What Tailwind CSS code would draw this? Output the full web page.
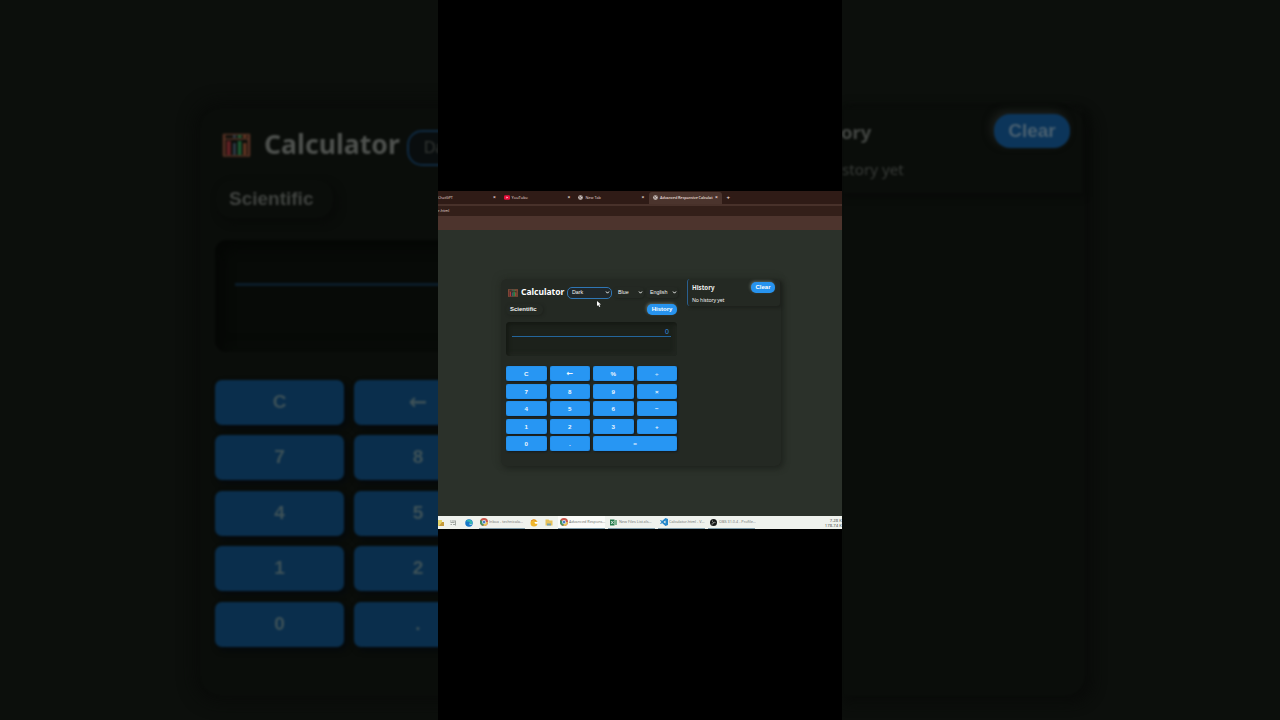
<!DOCTYPE html>
<html lang="en">
  <head>
    <meta charset="UTF-8" />
    <meta name="viewport" content="width=device-width, initial-scale=1.0" />
    <title>Advanced Responsive Calculator</title>
    <script src="https://cdn.jsdelivr.net/npm/@tailwindcss/browser@4"></script>
  </head>
  <body class="bg-black">
    <svg class="hidden">
      <symbol id="abacus" viewBox="0 0 28 24" preserveAspectRatio="none">
        <path d="M2 1v22M26 1v22" stroke="#a5533c" stroke-width="2.5" />
        <path d="M1 23h26M1 6h26M1 1.5h26" stroke="#a05a40" stroke-width="1.5" />
        <path d="M6.5 8v14" stroke="#b8343c" stroke-width="4" />
        <path d="M12 2v3M12 10v12" stroke="#5a6f8a" stroke-width="2.5" />
        <path d="M17 2v3M17 8v14" stroke="#2fa45a" stroke-width="3.5" />
        <path d="M22 2v3M22 10v12" stroke="#c0603c" stroke-width="3" />
      </symbol>
      <symbol id="chevron" viewBox="0 0 6 4">
        <path d="M1 .7l2 2.2 2-2.2" fill="none" stroke="#f3f5f3" stroke-width="1.3" />
      </symbol>
      <symbol id="globe" viewBox="0 0 10 10">
        <circle cx="5" cy="5" r="4.6" fill="#d9d0cc" />
        <path d="M2 3l3 1-1 2-2 0M6 1l1 2 2 1M5 8l2-2" fill="none" stroke="#4b3733" stroke-width="1.2" />
      </symbol>
      <symbol id="chrome" viewBox="0 0 16 16">
        <circle cx="8" cy="8" r="8" fill="#c9564b" />
        <path d="M8 8L1 4a8 8 0 0 0 6 12z" fill="#3f9463" />
        <path d="M8 8h8a8 8 0 0 1-9 8z" fill="#e6c25a" />
        <circle cx="8" cy="8" r="4" fill="#fff" />
        <circle cx="8" cy="8" r="3" fill="#4c7fc8" />
      </symbol>
    </svg>

    <div class="flex h-screen w-screen overflow-hidden font-['Liberation_Sans',sans-serif]">
      <!-- Left backdrop -->
      <aside class="w-[438px] h-full shrink-0 overflow-hidden bg-[#0c0f0c] pt-[108px] pl-[200px]">
        <div class="w-[600px] h-[588px] rounded-[20px] bg-[#0a0d0a] shadow-[0_0_16px_6px_#090b09] pt-[18px] pl-[15px] blur-[0.8px]">
          <div class="flex items-center h-[40px]">
            <svg class="ml-[7px] w-[29px] h-[24px] -mt-[3px] opacity-50"><use href="#abacus" /></svg>
            <h1 class="ml-[13px] w-[143px] whitespace-nowrap text-[26.6px] leading-none font-bold text-[#4d504d] font-['Noto_Sans',sans-serif] -mt-[4px]">Calculator</h1>
            <div class="w-[140px] h-[36px] mt-[4px] rounded-[15px] border-2 border-[#0f2a42] bg-[#090d0e] pl-[15px] flex items-center text-[16px] text-[#343734]">Dark</div>
          </div>
          <div class="mt-[14px] ml-[1px] w-[117px] h-[38px] rounded-[16px] shadow-[4px_4px_8px_#080a08] pl-[13px] flex items-center text-[19px] font-bold text-[#404340]">Scientific</div>
          <div class="mt-[22px] w-[540px] h-[112px] rounded-[12px] bg-[#070a07] shadow-[inset_8px_8px_12px_#050705,inset_0_-8px_10px_#090c09] pt-[43px] pl-[20px]">
            <div class="h-[3px] w-[500px] bg-[#0b1c29]"></div>
          </div>
          <div class="mt-[28px] grid grid-cols-[129px_129px] auto-rows-[45px] gap-x-[9.5px] gap-y-[10.4px] text-center text-[19px] leading-[43px] font-bold text-[#3e5258]">
            <div class="rounded-[7px] bg-[#0a2e4c] shadow-[3px_3px_6px_#04080c]">C</div>
            <div class="rounded-[7px] bg-[#0a2e4c] shadow-[3px_3px_6px_#04080c] font-['DejaVu_Sans',sans-serif] text-[22px]">←</div>
            <div class="rounded-[7px] bg-[#0a2e4c] shadow-[3px_3px_6px_#04080c]">7</div>
            <div class="rounded-[7px] bg-[#0a2e4c] shadow-[3px_3px_6px_#04080c]">8</div>
            <div class="rounded-[7px] bg-[#0a2e4c] shadow-[3px_3px_6px_#04080c]">4</div>
            <div class="rounded-[7px] bg-[#0a2e4c] shadow-[3px_3px_6px_#04080c]">5</div>
            <div class="rounded-[7px] bg-[#0a2e4c] shadow-[3px_3px_6px_#04080c]">1</div>
            <div class="rounded-[7px] bg-[#0a2e4c] shadow-[3px_3px_6px_#04080c]">2</div>
            <div class="rounded-[7px] bg-[#0a2e4c] shadow-[3px_3px_6px_#04080c]">0</div>
            <div class="rounded-[7px] bg-[#0a2e4c] shadow-[3px_3px_6px_#04080c]">.</div>
          </div>
        </div>
      </aside>

      <main class="w-[404px] h-full shrink-0 overflow-hidden bg-black pt-[191px]">
        <!-- Browser -->
        <div class="flex h-[13px] bg-[#2f1b16] text-[4px] leading-none text-[#e6dad5] font-['Open_Sans',sans-serif] whitespace-nowrap">
          <div class="flex items-center w-[62px] shrink-0"><span class="w-[55px] text-[3.7px]">ChatGPT</span><span class="text-[5px] font-bold">×</span></div>
          <div class="flex items-center w-[75px] shrink-0 pl-[4px]">
            <svg class="w-[6px] h-[5px]" viewBox="0 0 12 9"><rect width="12" height="9" rx="2.5" fill="#e8103c" /><path d="M5 2.5v4l3-2z" fill="#fff" /></svg>
            <span class="ml-[1.5px] w-[56px]">YouTube</span><span class="text-[5px] font-bold">×</span>
          </div>
          <div class="flex items-center w-[74px] shrink-0 pl-[3px]">
            <svg class="w-[5px] h-[5px]"><use href="#globe" /></svg>
            <span class="ml-[2.5px] w-[56px] text-[3.8px]">New Tab</span><span class="text-[5px] font-bold">×</span>
          </div>
          <div class="flex items-center w-[73px] h-[12px] mt-[1px] shrink-0 pl-[4px] pb-[1px] rounded-t-[3px] bg-[#4b342d]">
            <svg class="w-[5px] h-[5px]"><use href="#globe" /></svg>
            <span class="ml-[2px] w-[54px] text-[3.8px] font-semibold tracking-[-0.1px]">Advanced Responsive Calculat</span>
            <span class="ml-[1px] text-[5px] font-bold">×</span>
          </div>
          <div class="flex items-center pl-[4.5px] text-[6px] font-bold">+</div>
        </div>
        <div class="h-[2px] bg-[#48312a]"></div>
        <div class="h-[10px] bg-[#331f19] text-[4px] leading-[10px] text-[#e6dad5] font-['Open_Sans',sans-serif]">r.html</div>
        <div class="h-[14px] bg-[#4d342d]"></div>

        <!-- Page -->
        <div class="relative h-[286px] bg-[#2b312a] pt-[49px] pl-[63px]">
          <div class="flex w-[280px] h-[187px] rounded-[6px] bg-[#242923] shadow-[2px_2px_6px_#1d211c,-2px_-2px_6px_#2a3029] pl-[5px]">
            <section class="w-[171px] shrink-0 pt-[7px]">
              <div class="flex items-center h-[13px] text-[5.3px] leading-none text-[#f3f5f3]">
                <svg class="ml-[2px] w-[10px] h-[8px] shrink-0"><use href="#abacus" /></svg>
                <h1 class="ml-[3px] w-[46px] shrink-0 whitespace-nowrap text-[8.5px] leading-none font-bold text-white font-['Noto_Sans',sans-serif] -mt-[1px]">Calculator</h1>
                <div class="flex items-center justify-between w-[45px] h-[12px] shrink-0 rounded-[5px] border border-[#2f76b5] bg-[#20272a] pl-[4px] pr-[1px]"><span>Dark</span><svg class="w-[5px] h-[3px]"><use href="#chevron" /></svg></div>
                <div class="flex items-center justify-between w-[30px] h-[11px] shrink-0 ml-[2px] rounded-[4px] shadow-[1px_1px_2px_#1e221d] pl-[4px] pr-[1px]"><span>Blue</span><svg class="w-[5px] h-[3px]"><use href="#chevron" /></svg></div>
                <div class="flex items-center justify-between w-[32px] h-[11px] shrink-0 ml-[2px] rounded-[4px] shadow-[1px_1px_2px_#1e221d] pl-[4px] pr-[1px]"><span>English</span><svg class="w-[5px] h-[3px]"><use href="#chevron" /></svg></div>
              </div>
              <div class="flex items-center justify-between mt-[4px] h-[12px] text-[6px] leading-[11px] font-bold">
                <div class="w-[37px] h-[11px] rounded-[5px] text-[#f0f2f0] pl-[4px] shadow-[1px_1px_3px_#1e221d]">Scientific</div>
                <div class="w-[30px] h-[11px] rounded-[5px] bg-[#2793ee] text-white text-center shadow-[-1px_-1px_3px_#59625b]">History</div>
              </div>
              <div class="mt-[7px] h-[34px] rounded-[4px] bg-[#1c211b] shadow-[inset_2px_2px_4px_#141812,inset_-2px_-2px_4px_#242923] pt-[5px] px-[6px]">
                <div class="h-[10px] border-b border-[#24659b] text-right pr-[2px] text-[7px] leading-[9px] text-[#3391e6]">0</div>
              </div>
              <div class="mt-[10px] grid grid-cols-4 auto-rows-[15px] gap-x-[3px] gap-y-[2.5px] text-center text-[6.2px] leading-[15px] font-bold text-[#eef7ff]">
                <div class="rounded-[2px] bg-[#2796f3] shadow-[1px_1px_2px_#121a20,inset_0_0_1px_#1769b5]">C</div>
                <div class="rounded-[2px] bg-[#2796f3] shadow-[1px_1px_2px_#121a20,inset_0_0_1px_#1769b5] font-['DejaVu_Sans',sans-serif] text-[8px]">←</div>
                <div class="rounded-[2px] bg-[#2796f3] shadow-[1px_1px_2px_#121a20,inset_0_0_1px_#1769b5]">%</div>
                <div class="rounded-[2px] bg-[#2796f3] shadow-[1px_1px_2px_#121a20,inset_0_0_1px_#1769b5]">÷</div>
                <div class="rounded-[2px] bg-[#2796f3] shadow-[1px_1px_2px_#121a20,inset_0_0_1px_#1769b5]">7</div>
                <div class="rounded-[2px] bg-[#2796f3] shadow-[1px_1px_2px_#121a20,inset_0_0_1px_#1769b5]">8</div>
                <div class="rounded-[2px] bg-[#2796f3] shadow-[1px_1px_2px_#121a20,inset_0_0_1px_#1769b5]">9</div>
                <div class="rounded-[2px] bg-[#2796f3] shadow-[1px_1px_2px_#121a20,inset_0_0_1px_#1769b5]">×</div>
                <div class="rounded-[2px] bg-[#2796f3] shadow-[1px_1px_2px_#121a20,inset_0_0_1px_#1769b5]">4</div>
                <div class="rounded-[2px] bg-[#2796f3] shadow-[1px_1px_2px_#121a20,inset_0_0_1px_#1769b5]">5</div>
                <div class="rounded-[2px] bg-[#2796f3] shadow-[1px_1px_2px_#121a20,inset_0_0_1px_#1769b5]">6</div>
                <div class="rounded-[2px] bg-[#2796f3] shadow-[1px_1px_2px_#121a20,inset_0_0_1px_#1769b5]">−</div>
                <div class="rounded-[2px] bg-[#2796f3] shadow-[1px_1px_2px_#121a20,inset_0_0_1px_#1769b5]">1</div>
                <div class="rounded-[2px] bg-[#2796f3] shadow-[1px_1px_2px_#121a20,inset_0_0_1px_#1769b5]">2</div>
                <div class="rounded-[2px] bg-[#2796f3] shadow-[1px_1px_2px_#121a20,inset_0_0_1px_#1769b5]">3</div>
                <div class="rounded-[2px] bg-[#2796f3] shadow-[1px_1px_2px_#121a20,inset_0_0_1px_#1769b5]">+</div>
                <div class="rounded-[2px] bg-[#2796f3] shadow-[1px_1px_2px_#121a20,inset_0_0_1px_#1769b5]">0</div>
                <div class="rounded-[2px] bg-[#2796f3] shadow-[1px_1px_2px_#121a20,inset_0_0_1px_#1769b5]">.</div>
                <div class="col-span-2 rounded-[2px] bg-[#2796f3] shadow-[1px_1px_2px_#121a20,inset_0_0_1px_#1769b5]">=</div>
              </div>
            </section>
            <section class="ml-[10px] w-[93px] h-[27px] rounded-[3px] border-l border-[#2a5f8f] shadow-[2px_2px_3px_#1d211c] pl-[4px] pr-[5px] pt-[3px] text-[#eceeec] font-['Noto_Sans',sans-serif]">
              <div class="flex justify-between h-[11px]">
                <h2 class="text-[6.2px] leading-[12px] font-bold">History</h2>
                <div class="w-[24px] h-[11px] rounded-[5px] bg-[#2793ee] text-white text-center text-[6px] leading-[11px] font-bold shadow-[-1px_-1px_3px_#59625b] font-['Liberation_Sans',sans-serif]">Clear</div>
              </div>
              <p class="mt-[2px] text-[5.2px] leading-[10px] tracking-[-0.12px]">No history yet</p>
            </section>
          </div>
          <!-- Mouse cursor -->
          <svg class="absolute left-[159px] top-[71px] w-[4px] h-[6px]" viewBox="0 0 8 12"><path d="M0 0v10l2.5-2 2 4 2-1-2-4H8z" fill="#fff" /></svg>
        </div>

        <!-- Taskbar -->
        <div class="flex items-center h-[13px] bg-[#eff2ed] text-[3.8px] leading-none text-[#6d716e] font-['Open_Sans',sans-serif] whitespace-nowrap overflow-hidden">
          <svg class="w-[8px] h-[8px] shrink-0" viewBox="0 0 8 8"><path d="M0 1h4v6H0z" fill="#e6d56a" /><path d="M4 3h2v4H1" fill="#c59a3a" /></svg>
          <svg class="ml-[4px] w-[6px] h-[6px] shrink-0" viewBox="0 0 12 12"><path d="M0 2h3M4 2h6M1 5h8M1 9h3M6 9h4M11 1v10" stroke="#777d78" stroke-width="1.3" /></svg>
          <svg class="ml-[9px] w-[8px] h-[8px] shrink-0" viewBox="0 0 16 16"><circle cx="8" cy="8" r="7.5" fill="#1678c8" /><path d="M2 5a7 7 0 0 1 13 3q-1 3-5 2 1-5-4-5-2 0-4 0z" fill="#35b9b0" /><path d="M8 7q1 5 7 4l-1 1q-6 1-6-5z" fill="#eff2ed" /></svg>
          <div class="ml-[6px] w-[46px] h-full shrink-0 flex items-center border-b border-[#7f9cab] pl-[1px]"><svg class="w-[8px] h-[8px] shrink-0"><use href="#chrome" /></svg><span class="ml-[1px]">Inbox - technicala...</span></div>
          <svg class="ml-[5px] w-[8px] h-[8px] shrink-0" viewBox="0 0 16 16"><circle cx="8" cy="8" r="7" fill="#efb62c" /><path d="M9 6h7v3q-3 1-6 0z" fill="#fff" /><path d="M2 4q5-5 10-1" fill="none" stroke="#de8d28" stroke-width="2" /></svg>
          <svg class="ml-[7px] w-[8px] h-[7px] shrink-0" viewBox="0 0 16 14"><path d="M1 1h6l2 2h6v10H1z" fill="#e5c15a" /><path d="M4 9h8v4H4z" fill="#769fae" /></svg>
          <div class="ml-[5px] w-[47px] h-full shrink-0 flex items-center border-b border-[#7f9cab] bg-[#fafbf8] pl-[2px]"><svg class="w-[8px] h-[8px] shrink-0"><use href="#chrome" /></svg><span class="ml-[1px]">Advanced Respons...</span></div>
          <div class="ml-[3px] w-[47px] h-full shrink-0 flex items-center border-b border-[#7f9cab] pl-[2px]"><svg class="w-[7px] h-[7px] shrink-0" viewBox="0 0 14 14"><path d="M0 1h9v12H0z" fill="#237a4a" /><path d="M9 2h5v10H9z" fill="#79b28d" /><path d="M2 4l5 6M7 4l-5 6" stroke="#fff" stroke-width="1.5" /></svg><span class="ml-[2px]">New Files List.xls...</span></div>
          <div class="ml-[3px] w-[47px] h-full shrink-0 flex items-center border-b border-[#7f9cab] pl-[2px]"><svg class="w-[8px] h-[8px] shrink-0" viewBox="0 0 16 16"><path d="M11 0l5 2v12l-5 2-7-6-2 2-2-1 3-3-3-3 2-1 2 2zM11 5L7 8l4 3z" fill="#2587ca" fill-rule="evenodd" /></svg><span class="ml-[1px]">Calculator.html - V...</span></div>
          <div class="ml-[3px] w-[47px] h-full shrink-0 flex items-center border-b border-[#7f9cab] pl-[2px]"><svg class="w-[7px] h-[7px] shrink-0" viewBox="0 0 14 14"><circle cx="7" cy="7" r="7" fill="#171918" /><path d="M5 3q-1 3 2 4 3-2 4 1M7 7q0 4-4 3" fill="none" stroke="#c9ccca" stroke-width="1.2" /></svg><span class="ml-[2px]">OBS 31.0.4 - Profile...</span></div>
          <div class="ml-auto shrink-0 pl-[4px] text-[4.3px] leading-[5px] text-[#383c39] text-right"><div>7.28 K</div><div>178.74 K</div></div>
        </div>
      </main>

      <!-- Right backdrop -->
      <aside class="w-[438px] h-full shrink-0 overflow-hidden bg-[#0c0f0c] pt-[108px]">
        <div class="w-[243px] h-[588px] rounded-r-[20px] bg-[#0a0d0a] shadow-[5px_4px_12px_4px_#090b09] blur-[0.8px]">
          <div class="h-[85px] w-[240px] shadow-[2px_4px_6px_#080a08] pt-[6px] text-[#424542] font-['Noto_Sans',sans-serif] whitespace-nowrap">
            <div class="flex justify-between h-[35px] pr-[12px]">
              <h2 class="-ml-[1px] text-[18.5px] leading-[36px] font-bold">ory</h2>
              <div class="w-[76px] h-[34px] rounded-[16px] bg-[#0c355a] text-center text-[19px] leading-[33px] font-bold text-[#4a6070] shadow-[-3px_-3px_8px_#1c1f1c] font-['Liberation_Sans',sans-serif]">Clear</div>
            </div>
            <p class="mt-[7px] text-[15.2px] leading-[26px] text-[#383b38]">story yet</p>
          </div>
        </div>
      </aside>
    </div>
  </body>
</html>
